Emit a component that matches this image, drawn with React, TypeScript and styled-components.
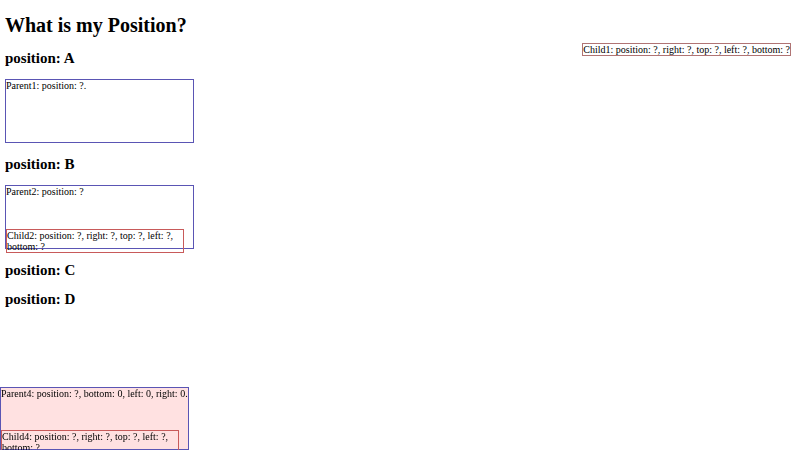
import React from "react";
import styled, { createGlobalStyle, css } from "styled-components";

const GlobalStyle = createGlobalStyle`
  html, body {
    background: #ffffff;
  }
  body {
    margin: 5px;
    font-family: "Liberation Serif", "Times New Roman", serif;
    font-size: 10px;
    line-height: normal;
    color: #000000;
  }
`;

const Title = styled.h1`
  font-size: 20px;
  font-weight: bold;
  margin: 8.6px 0 13.4px;
`;

const SectionHeading = styled.h2`
  font-size: 15px;
  font-weight: bold;
  margin: 12.45px 0;
`;

const Parent = styled.div<{ $fixed?: boolean }>`
  position: relative;
  width: 187px;
  height: 62px;
  border: 1px solid #5a55b4;
  ${(p) =>
    p.$fixed &&
    css`
      position: fixed;
      bottom: 0;
      left: 0;
      height: 61.5px;
      background: #ffe1e1;
    `}
`;

const StaticParent = styled(Parent)`
  position: static;
`;

const Child = styled.div<{ $mode: "corner" | "shifted" }>`
  border: 1px solid #c85a5a;
  ${(p) =>
    p.$mode === "corner"
      ? css`
          position: absolute;
          top: 43px;
          right: 9px;
          white-space: nowrap;
          border-color: #b07474;
        `
      : css`
          position: relative;
          top: 31.5px;
          width: 176px;
        `}
`;

export default function App() {
  return (
    <>
      <GlobalStyle />
      <Title>What is my Position?</Title>

      <SectionHeading>position: A</SectionHeading>
      <StaticParent>
        Parent1: position: ?.
        <Child $mode="corner">
          Child1: position: ?, right: ?, top: ?, left: ?, bottom: ?
        </Child>
      </StaticParent>

      <SectionHeading>position: B</SectionHeading>
      <Parent>
        Parent2: position: ?
        <Child $mode="shifted">
          Child2: position: ?, right: ?, top: ?, left: ?, bottom: ?
        </Child>
      </Parent>

      <SectionHeading>position: C</SectionHeading>

      <SectionHeading>position: D</SectionHeading>
      <Parent $fixed>
        Parent4: position: ?, bottom: 0, left: 0, right: 0.
        <Child $mode="shifted">
          Child4: position: ?, right: ?, top: ?, left: ?, bottom: ?
        </Child>
      </Parent>
    </>
  );
}
